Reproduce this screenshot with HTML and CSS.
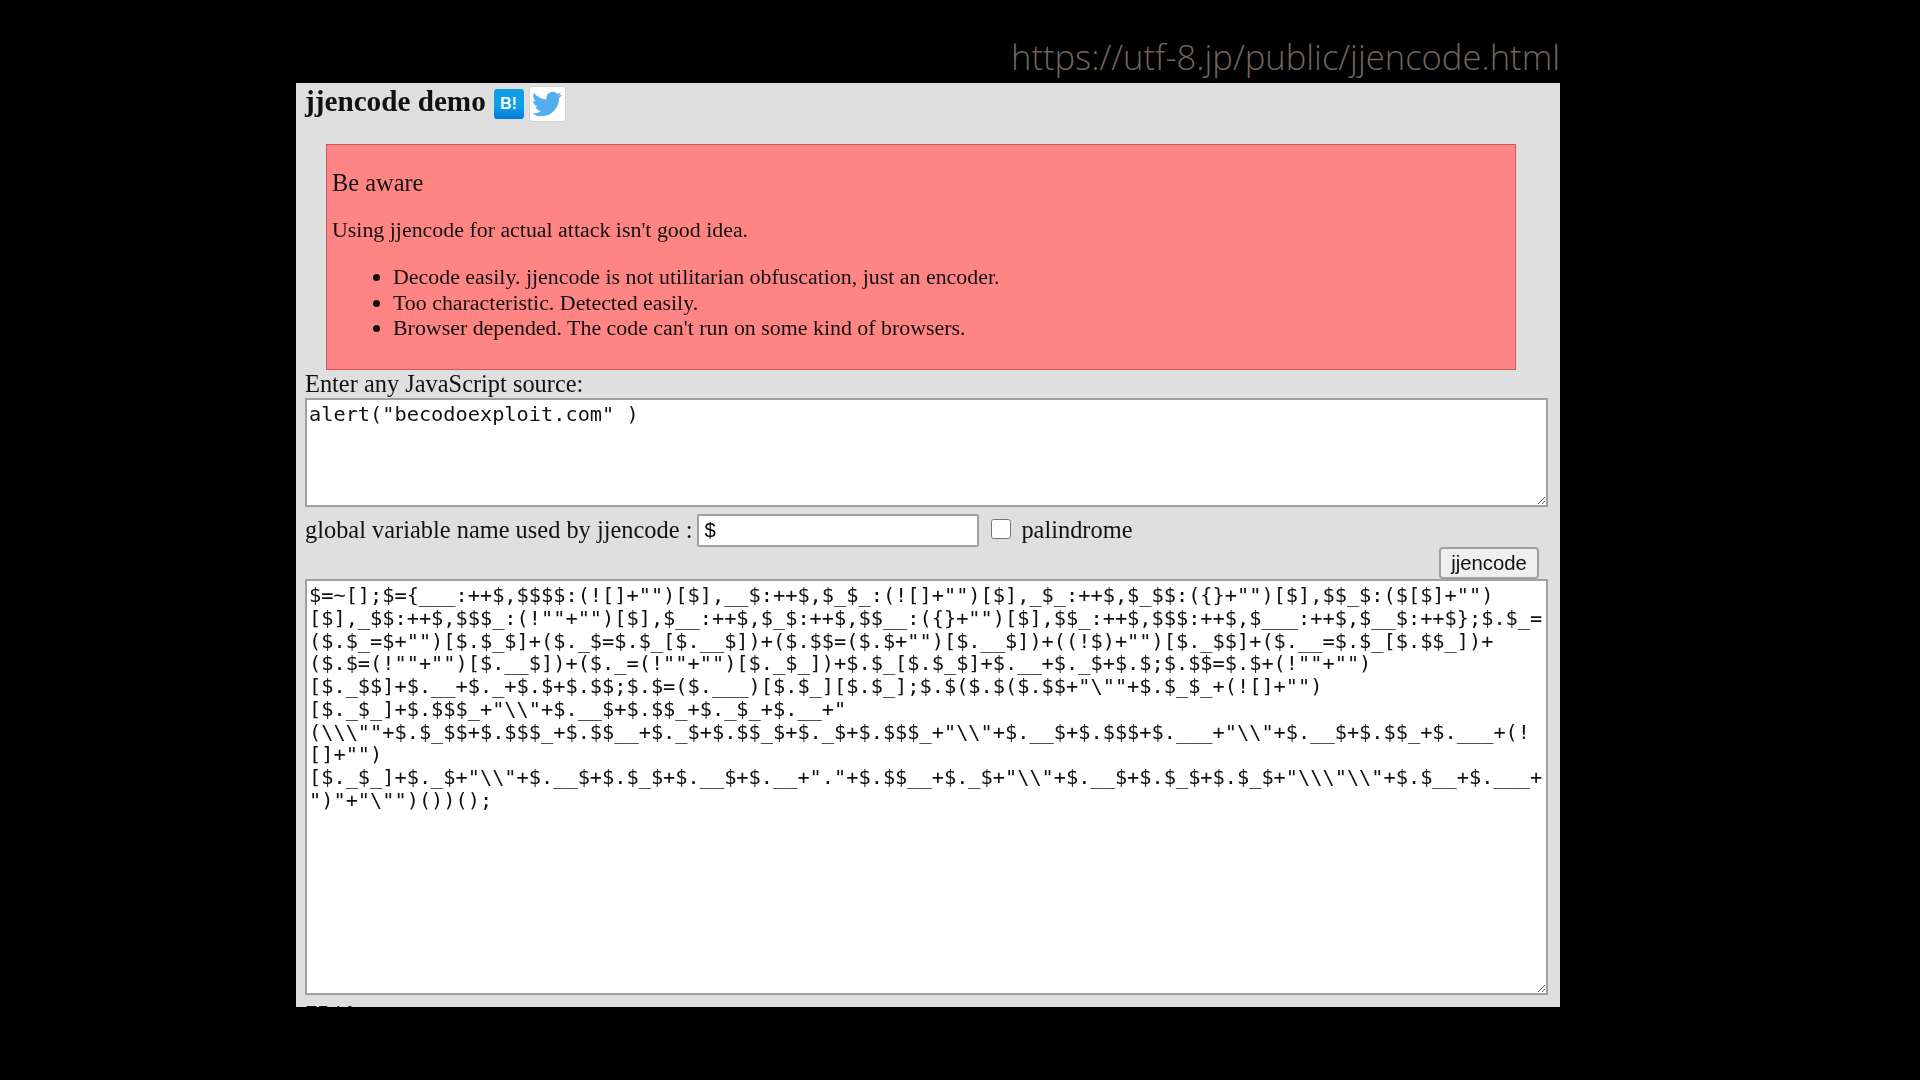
FILE: index.html
```html
<!DOCTYPE html>
<html lang="en">
<head>
<meta charset="utf-8">
<title>jjencode demo</title>
<link rel="stylesheet" href="styles.css">
</head>
<body>
<div class="slide">
  <p class="url">https://utf-8.jp/public/jjencode.html</p>
  <main class="page">
    <header class="head">
      <h1 class="title">jjencode demo</h1>
      <span class="hatena"><span class="hatena-text">B!</span></span>
      <span class="tweet">
        <svg class="bird" viewBox="0 0 24 24" aria-hidden="true"><path d="M23.953 4.57a10 10 0 01-2.825.775 4.958 4.958 0 002.163-2.723c-.951.555-2.005.959-3.127 1.184a4.92 4.92 0 00-8.384 4.482C7.69 8.095 4.067 6.13 1.64 3.162a4.822 4.822 0 00-.666 2.475c0 1.71.87 3.213 2.188 4.096a4.904 4.904 0 01-2.228-.616v.06a4.923 4.923 0 003.946 4.827 4.996 4.996 0 01-2.212.085 4.936 4.936 0 004.604 3.417 9.867 9.867 0 01-6.102 2.105c-.39 0-.779-.023-1.17-.067a13.995 13.995 0 007.557 2.209c9.053 0 13.998-7.496 13.998-13.985 0-.21 0-.42-.015-.63A9.935 9.935 0 0024 4.59z"/></svg>
      </span>
    </header>
    <section class="warning">
      <h2 class="warning-title">Be aware</h2>
      <p class="warning-lead">Using jjencode for actual attack isn't good idea.</p>
      <ul class="warning-list">
        <li>Decode easily. jjencode is not utilitarian obfuscation, just an encoder.</li>
        <li>Too characteristic. Detected easily.</li>
        <li>Browser depended. The code can't run on some kind of browsers.</li>
      </ul>
    </section>
    <label class="label" for="src">Enter any JavaScript source:</label>
    <textarea class="code code-src" id="src" spellcheck="false">alert("becodoexploit.com" )</textarea>
    <div class="options">
      <span class="opt-text">global variable name used by jjencode :</span>
      <input class="gv" type="text" value="$">
      <input class="check" type="checkbox">
      <span class="opt-text">palindrome</span>
    </div>
    <div class="actions"><button class="btn" type="button">jjencode</button></div>
    <textarea class="code code-out" spellcheck="false">$=~[];$={___:++$,$$$$:(![]+"")[$],__$:++$,$_$_:(![]+"")[$],_$_:++$,$_$$:({}+"")[$],$$_$:($[$]+"")[$],_$$:++$,$$$_:(!""+"")[$],$__:++$,$_$:++$,$$__:({}+"")[$],$$_:++$,$$$:++$,$___:++$,$__$:++$};$.$_=($.$_=$+"")[$.$_$]+($._$=$.$_[$.__$])+($.$$=($.$+"")[$.__$])+((!$)+"")[$._$$]+($.__=$.$_[$.$$_])+($.$=(!""+"")[$.__$])+($._=(!""+"")[$._$_])+$.$_[$.$_$]+$.__+$._$+$.$;$.$$=$.$+(!""+"")[$._$$]+$.__+$._+$.$+$.$$;$.$=($.___)[$.$_][$.$_];$.$($.$($.$$+"\""+$.$_$_+(![]+"")[$._$_]+$.$$$_+"\\"+$.__$+$.$$_+$._$_+$.__+"(\\\""+$.$_$$+$.$$$_+$.$$__+$._$+$.$$_$+$._$+$.$$$_+"\\"+$.__$+$.$$$+$.___+"\\"+$.__$+$.$$_+$.___+(![]+"")[$._$_]+$._$+"\\"+$.__$+$.$_$+$.__$+$.__+"."+$.$$__+$._$+"\\"+$.__$+$.$_$+$.$_$+"\\\"\\"+$.$__+$.___+")"+"\"")())();</textarea>
    <p class="total">754 bytes</p>
  </main>
</div>
</body>
</html>
```

FILE: styles.css
```css
html, body {
  margin: 0;
  height: 100%;
  background: #000;
}
.slide {
  width: 1264px;
  height: 1080px;
  margin-left: 296px;
  display: flex;
  flex-direction: column;
}
.url {
  margin: 0;
  height: 83px;
  box-sizing: border-box;
  padding-top: 33px;
  line-height: 48px;
  text-align: right;
  font-family: "Open Sans", sans-serif;
  font-weight: 300;
  font-size: 34.6px;
  color: #6e665d;
}
.page {
  height: 924px;
  box-sizing: border-box;
  padding: 0 9px;
  overflow: hidden;
  background: #dfdfdf;
  font-family: "Liberation Serif", serif;
  font-size: 21.9px;
  line-height: 23px;
  color: #111;
  filter: blur(0.35px);
}
.head {
  display: flex;
  align-items: flex-start;
  height: 61px;
  padding-top: 3px;
  box-sizing: border-box;
}
.title {
  margin: 0 8px 0 0;
  font-size: 29.2px;
  line-height: 30px;
  font-weight: bold;
}
.hatena {
  width: 30px;
  height: 30px;
  margin: 3px 5px 0 0;
  border-radius: 3px;
  background: linear-gradient(#0f9fe6 60%, #0079d8);
  display: flex;
  align-items: center;
  justify-content: center;
}
.hatena-text {
  font-family: "Liberation Sans", sans-serif;
  font-weight: bold;
  font-size: 16px;
  line-height: 16px;
  color: #fff;
}
.tweet {
  width: 37px;
  height: 36px;
  box-sizing: border-box;
  border-radius: 3px;
  background: #fff;
  border: 1px solid #d2d2d2;
  display: flex;
  align-items: center;
  justify-content: center;
}
.bird {
  width: 30px;
  height: 30px;
  fill: #55acee;
}
.warning {
  margin: 0 35px 0 21px;
  height: 226px;
  box-sizing: border-box;
  padding: 0 5px;
  background: #ff8585;
  border: 1px solid #c55;
  display: flow-root;
}
.warning-title {
  margin: 24px 0 0;
  font-size: 24.4px;
  line-height: 27px;
  font-weight: normal;
}
.warning-lead {
  margin: 22px 0 0;
}
.warning-list {
  margin: 23px 0 0;
  padding-left: 61px;
  line-height: 25.7px;
}
.label {
  display: block;
  margin-top: 1px;
  padding-bottom: 2px;
  font-size: 24.4px;
  line-height: 25px;
}
.code {
  display: block;
  box-sizing: border-box;
  width: 1243px;
  margin: 0;
  padding: 3px 1px 3px 2px;
  border: 2px solid #a0a0a0;
  background: #fff;
  color: #111;
  font-family: "DejaVu Sans Mono", monospace;
  font-size: 20.3px;
  line-height: 22.75px;
  border-radius: 0;
  outline: none;
}
.code-src { height: 109px; }
.code-out { height: 416px; }
.options {
  display: flex;
  align-items: center;
  height: 33px;
  margin-top: 7px;
  font-size: 24.4px;
  line-height: 26px;
}
.opt-text {
  margin-bottom: 2px;
}
.gv {
  box-sizing: border-box;
  width: 282px;
  height: 33px;
  margin: 0 0 0 5px;
  padding: 1px 5px;
  border: 2px solid #a0a0a0;
  border-radius: 2px;
  background: #fff;
  font-family: "Liberation Sans", sans-serif;
  font-size: 20.3px;
}
.check {
  width: 20px;
  height: 20px;
  margin: 0 10px 4px 12px;
}
.actions {
  display: flex;
  justify-content: flex-end;
  padding-right: 12px;
  height: 32px;
}
.btn {
  box-sizing: border-box;
  width: 100px;
  height: 32px;
  margin: 0;
  padding: 0;
  border: 2px solid #a0a0a0;
  border-radius: 4px;
  background: #efefef;
  color: #111;
  font-family: "Liberation Sans", sans-serif;
  font-size: 20.3px;
}
.total {
  margin: 8px 0 0;
  font-size: 24.4px;
}
```
